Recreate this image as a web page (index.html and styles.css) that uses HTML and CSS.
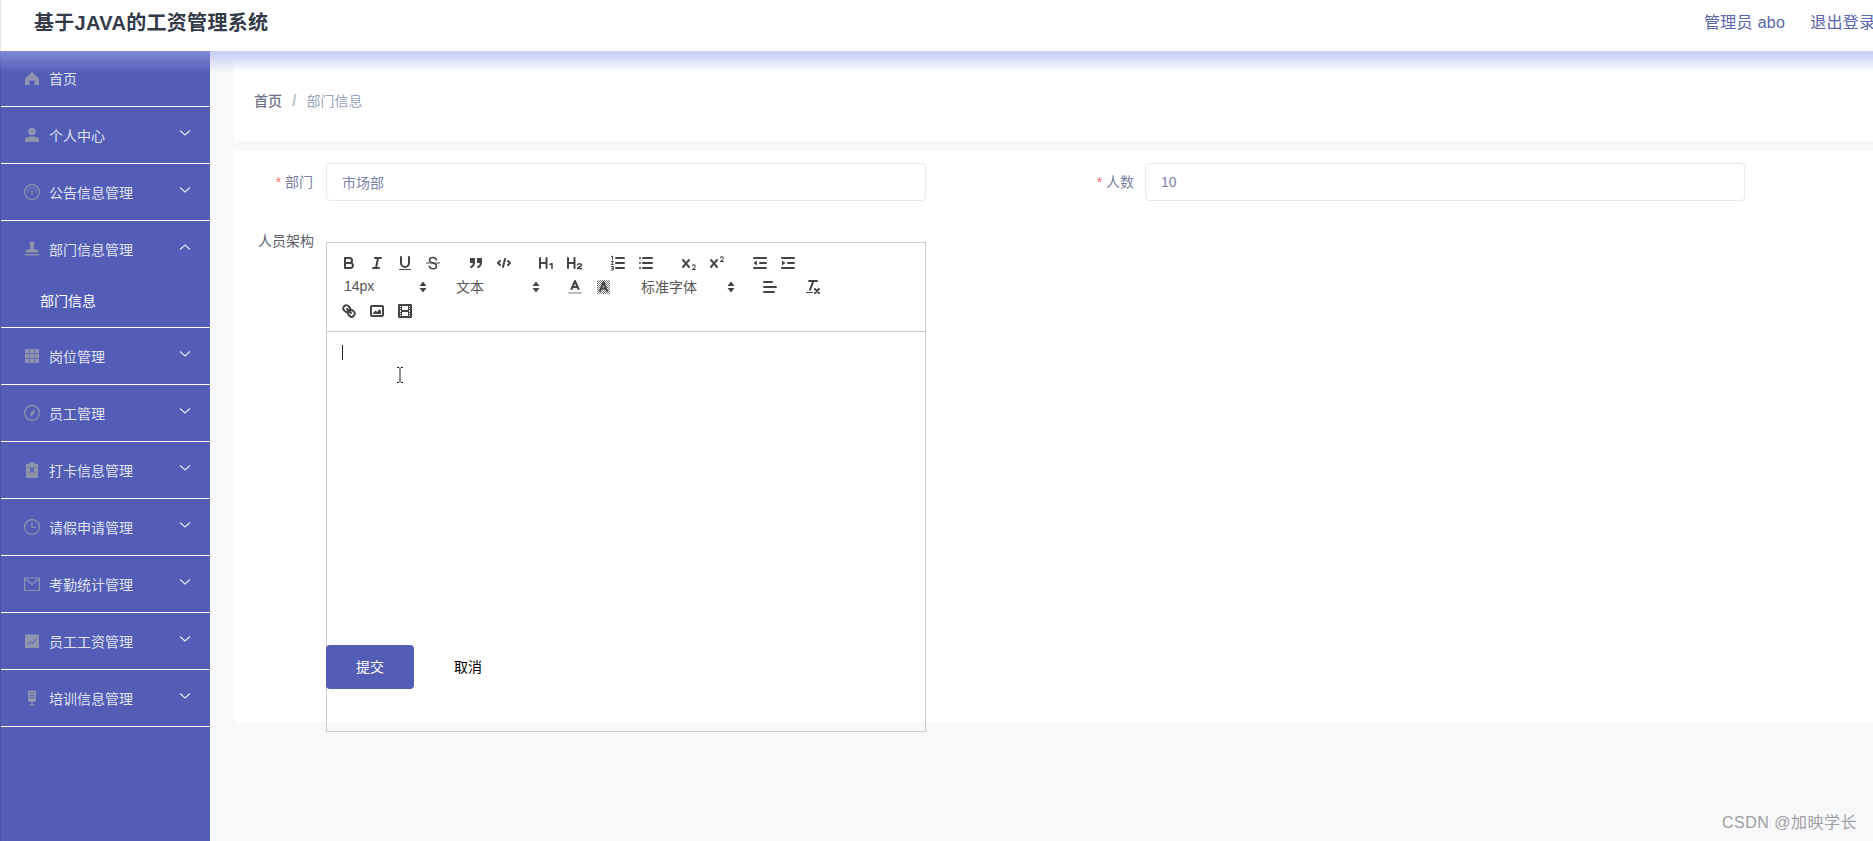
FILE: index.html
```html
<!DOCTYPE html>
<html lang="zh">
<head>
<meta charset="utf-8">
<title>基于JAVA的工资管理系统</title>
<link rel="stylesheet" href="styles.css">
</head>
<body>
<header class="topbar">
  <div class="brand">基于JAVA的工资管理系统</div>
  <div class="user"><span>管理员 abo</span><span class="logout">退出登录</span></div>
</header>
<div class="shell">
  <nav class="side">
    <div class="item first"><svg class="ic" viewBox="0 0 16 16"><path d="M8 2 1 8.500V15h4.500v-4.500h5V15H15V8.500z"/></svg><span>首页</span></div>
    <div class="item"><svg class="ic" viewBox="0 0 16 16"><circle cx="8" cy="4.500" r="3.800"/><path d="M1 15v-2.500C1 10.500 3 9.500 8 9.500s7 1 7 3V15z"/></svg><span>个人中心</span><svg class="chev" viewBox="0 0 12 8"><path d="M1 1.500 6 6l5-4.500"/></svg></div>
    <div class="item"><svg class="ic ol" viewBox="0 0 16 16"><circle cx="8" cy="8" r="7.400"/><path class="thin" d="M3.500 9a4.600 4.600 0 1 1 9 0"/><path d="M8 11V6.500"/></svg><span>公告信息管理</span><svg class="chev" viewBox="0 0 12 8"><path d="M1 1.500 6 6l5-4.500"/></svg></div>
    <div class="group">
      <div class="head"><svg class="ic" viewBox="0 0 16 16"><path d="M5.500 2.500C5.500 1 6.500.5 8 .5s2.500.5 2.500 2c0 2-1 3-1 5 0 1 3.500 1 5 2v2h-13v-2c1.500-1 5-1 5-2 0-2-1-3-1-5zM1 13h14v1.500H1z"/></svg><span>部门信息管理</span><svg class="chev" viewBox="0 0 12 8"><path d="M1 6.500 6 2l5 4.500"/></svg></div>
      <div class="sub">部门信息</div>
    </div>
    <div class="item"><svg class="ic" viewBox="0 0 16 16"><path d="M1 1h4.300v4.300H1zM5.900 1h4.200v4.300H5.900zM10.700 1H15v4.300h-4.300zM1 5.900h4.300v4.200H1zM5.900 5.900h4.200v4.200H5.900zM10.700 5.900H15v4.200h-4.300zM1 10.700h4.300V15H1zM5.900 10.700h4.200V15H5.900zM10.700 10.700H15V15h-4.300z"/></svg><span>岗位管理</span><svg class="chev" viewBox="0 0 12 8"><path d="M1 1.500 6 6l5-4.500"/></svg></div>
    <div class="item"><svg class="ic ol" viewBox="0 0 16 16"><circle cx="8" cy="8" r="7.400"/><path class="fl" d="M11 4 9.500 9.500 6 12l1-4.500z"/></svg><span>员工管理</span><svg class="chev" viewBox="0 0 12 8"><path d="M1 1.500 6 6l5-4.500"/></svg></div>
    <div class="item"><svg class="ic" viewBox="0 0 16 16"><path fill-rule="evenodd" d="M2 2h3V.5h6V2h3v14H2zM5 5.700 7 8l-2 2.300.9.800L8 9l2.100 2.100.9-.8L9 8l2-2.300-.9-.8L8 7 5.900 4.900z"/></svg><span>打卡信息管理</span><svg class="chev" viewBox="0 0 12 8"><path d="M1 1.500 6 6l5-4.500"/></svg></div>
    <div class="item"><svg class="ic ol" viewBox="0 0 16 16"><circle cx="8" cy="8" r="7.400"/><path d="M8 3.500V8.500h4"/></svg><span>请假申请管理</span><svg class="chev" viewBox="0 0 12 8"><path d="M1 1.500 6 6l5-4.500"/></svg></div>
    <div class="item"><svg class="ic ol" viewBox="0 0 16 16"><path d="M.6 2h14.800v12.500H.6zM1 2.500l7 6 7-6"/></svg><span>考勤统计管理</span><svg class="chev" viewBox="0 0 12 8"><path d="M1 1.500 6 6l5-4.500"/></svg></div>
    <div class="item"><svg class="ic" viewBox="0 0 16 16"><path fill-rule="evenodd" d="M1 1.500h14v13.500H1zM3.500 11.500l3-3 2 1.200 3.500-4 .5.500-3.800 4.500-2-1.200-2.600 2.500z"/></svg><span>员工工资管理</span><svg class="chev" viewBox="0 0 12 8"><path d="M1 1.500 6 6l5-4.500"/></svg></div>
    <div class="item"><svg class="ic" viewBox="0 0 16 16"><path fill-rule="evenodd" d="M4 2Q4 .5 5.500 .5h5Q12 .5 12 2v8q0 2-2 2H6q-2 0-2-2zM5.500 3.500h5v-.8h-5zM5.500 5.800h5V5h-5zM5.500 8.100h5v-.8h-5zM7.400 12.500h1.200v2H11v1H5v-1h2.400z"/></svg><span>培训信息管理</span><svg class="chev" viewBox="0 0 12 8"><path d="M1 1.500 6 6l5-4.500"/></svg></div>
  </nav>
  <main class="main">
    <div class="crumb"><b>首页</b><i>/</i><span>部门信息</span></div>
    <form class="card">
      <div class="row">
        <div class="field left"><label><em>*</em> 部门</label><div class="input">市场部</div></div>
        <div class="field right"><label><em>*</em> 人数</label><div class="input">10</div></div>
      </div>
      <div class="editor-row">
        <label class="elabel">人员架构</label>
        <div class="editor">
          <div class="toolbar">
            <div class="tline">
              <svg class="t" viewBox="0 0 18 18"><path d="M5,4H9.500A2.500,2.500,0,0,1,12,6.500v0A2.500,2.500,0,0,1,9.500,9H5V4Z"/><path d="M5,9h5.500A2.500,2.500,0,0,1,13,11.500v0A2.500,2.500,0,0,1,10.500,14H5V9Z"/></svg>
              <svg class="t" viewBox="0 0 18 18"><path d="M7 4h6M5 14h6M8 14l2-10"/></svg>
              <svg class="t" viewBox="0 0 18 18"><path d="M5,3V9a4,4,0,0,0,4,4H9a4,4,0,0,0,4-4V3"/><rect class="fl" x="3" y="15" width="12" height="1" rx=".5"/></svg>
              <svg class="t end" viewBox="0 0 18 18"><path class="hair" d="M2.500 9h13"/><path class="mid" d="M12.500 6C12 4.300 10.500 3.500 9 3.500 7 3.500 5.500 4.700 5.500 6.200c0 1.300 1 2.100 3.500 2.800 2.500.7 3.500 1.500 3.500 3 0 1.500-1.500 2.800-3.500 2.800-1.800 0-3.200-.8-3.700-2.500"/></svg>
              <svg class="t" viewBox="0 0 18 18"><rect class="fl" x="3" y="4" width="5" height="5"/><rect class="fl" x="10" y="4" width="5" height="5"/><path d="M7,8c0,4.030-3,5-3,5M14,8c0,4.030-3,5-3,5"/></svg>
              <svg class="t end" viewBox="0 0 18 18"><path d="M5 7 3 9l2 2M13 7l2 2-2 2M10 5 8 13"/></svg>
              <svg class="t" viewBox="0 0 18 18"><path d="M2 4v10M8.500 4v10M2 9h6.500"/><path class="mid" d="M12 10.500l2-1V14.500"/></svg>
              <svg class="t end" viewBox="0 0 18 18"><path d="M2 4v10M8.500 4v10M2 9h6.500"/><path class="mid" d="M11.500 11c.3-1.800 4-1.800 4 0 0 1.500-3.500 2-4 3.500h4"/></svg>
              <svg class="t" viewBox="0 0 18 18"><path d="M7 4h8M7 9h8M7 14h8"/><path class="hair" d="M2.500 2.500l1-.5v4M2.300 7.500h2l-2 3h2M2.300 12.500h2v3.500h-2M2.800 14.200h1.500"/></svg>
              <svg class="t end" viewBox="0 0 18 18"><path d="M6 4h9M6 9h9M6 14h9M3 4h0M3 9h0M3 14h0"/></svg>
              <svg class="t" viewBox="0 0 18 18"><path class="fl" d="M15.500,15H13.861a3.858,3.858,0,0,0,1.914-2.975,1.800,1.800,0,0,0-1.600-1.751A1.921,1.921,0,0,0,12.021,11.700a0.500,0.500,0,1,0,.957.291,0.914,0.914,0,0,1,1.053-.725,0.810,0.810,0,0,1,.744.762c0,1.076-1.170,1.870-1.940,2.431A1.456,1.456,0,0,0,12,15.500a0.500,0.500,0,0,0,.5.5h3A0.500,0.500,0,0,0,15.500,15Z"/><path class="fl" d="M9.651,5.241a1,1,0,0,0-1.410.108L6,7.964,3.759,5.349a1,1,0,1,0-1.519,1.300L4.683,9.500,2.241,12.350a1,1,0,1,0,1.519,1.300L6,11.036l2.241,2.615a1,1,0,0,0,1.519-1.300L7.317,9.500,9.759,6.651A1,1,0,0,0,9.651,5.241Z"/></svg>
              <svg class="t end" viewBox="0 0 18 18"><path class="fl" d="M15.500,7H13.861a4.015,4.015,0,0,0,1.914-2.975,1.800,1.800,0,0,0-1.600-1.751A1.922,1.922,0,0,0,12.021,3.700a0.500,0.500,0,1,0,.957.291,0.917,0.917,0,0,1,1.053-.725,0.810,0.810,0,0,1,.744.762c0,1.077-1.164,1.925-1.934,2.486A1.423,1.423,0,0,0,12,7.500a0.500,0.500,0,0,0,.5.5h3A0.500,0.500,0,0,0,15.500,7Z"/><path class="fl" d="M9.651,5.241a1,1,0,0,0-1.410.108L6,7.964,3.759,5.349a1,1,0,1,0-1.519,1.300L4.683,9.500,2.241,12.350a1,1,0,1,0,1.519,1.300L6,11.036l2.241,2.615a1,1,0,0,0,1.519-1.300L7.317,9.500,9.759,6.651A1,1,0,0,0,9.651,5.241Z"/></svg>
              <svg class="t" viewBox="0 0 18 18"><path d="M3 14h12M3 4h12M9 9h6"/><path class="fl" d="M6 6.500v5L2.500 9z"/></svg>
              <svg class="t" viewBox="0 0 18 18"><path d="M3 14h12M3 4h12M9 9h6"/><path class="fl" d="M3 6.500v5L6.500 9z"/></svg>
            </div>
            <div class="tline">
              <span class="pick w1">14px<svg class="updown" viewBox="0 0 8 12"><path d="M4 .5 7.500 5H.5zM4 11.500.5 7h7z"/></svg></span>
              <span class="pick w2">文本<svg class="updown" viewBox="0 0 8 12"><path d="M4 .5 7.500 5H.5zM4 11.500.5 7h7z"/></svg></span>
              <svg class="t" viewBox="0 0 18 18"><path d="M5.500 11 9 3l3.500 8M6.400 9h5.200"/><path class="mute" d="M3 15h12"/></svg>
              <svg class="t end" viewBox="0 0 18 18"><defs><pattern id="dots" width="2" height="2" patternUnits="userSpaceOnUse"><rect class="dot" width="1" height="1"/><rect class="dot" x="1" y="1" width="1" height="1"/></pattern></defs><rect class="dots" x="3" y="2" width="13" height="14"/><path d="M6 13 9.500 4l3.500 9M7 10.500h5"/></svg>
              <span class="pick w3">标准字体<svg class="updown" viewBox="0 0 8 12"><path d="M4 .5 7.500 5H.5zM4 11.500.5 7h7z"/></svg></span>
              <svg class="t end" viewBox="0 0 18 18"><path d="M3 4h8M3 9h12M3 14h10"/></svg>
              <svg class="t" viewBox="0 0 18 18"><path d="M5 3h8M6 12 9.350 3M11 11l4 4M15 11l-4 4"/><rect class="fl" x="2" y="14" width="7" height="1" rx=".5"/></svg>
            </div>
            <div class="tline">
              <svg class="t" viewBox="0 0 18 18"><path d="M7 7l4 4M8.900,4.577a3.476,3.476,0,0,1,.36,4.679A3.476,3.476,0,0,1,4.577,8.900C3.185,7.500,2.035,6.400,4.217,4.217S7.500,3.185,8.900,4.577Z"/><path d="M13.423,9.100a3.476,3.476,0,0,0-4.679-.36,3.476,3.476,0,0,0,.36,4.679c1.392,1.392,2.500,2.542,4.679.36S14.815,10.500,13.423,9.100Z"/></svg>
              <svg class="t" viewBox="0 0 18 18"><rect x="3" y="4" width="12" height="10" rx="1"/><path class="fl" d="M5 12v-1l2.500-2.500L9 10l2.500-3L13 9v3z"/></svg>
              <svg class="t" viewBox="0 0 18 18"><rect x="3" y="3" width="12" height="12"/><path class="fl" d="M5 3h1v12H5zM12 3h1v12h-1zM5 8h8v2H5zM3 5h3v1H3zM3 7h3v1H3zM3 10h3v1H3zM3 12h3v1H3zM12 5h3v1h-3zM12 7h3v1h-3zM12 10h3v1h-3zM12 12h3v1h-3z"/></svg>
            </div>
          </div>
          <div class="body"><span class="caret"></span></div>
        </div>
      </div>
      <div class="actions"><button type="button" class="submit">提交</button><button type="button" class="cancel">取消</button></div>
    </form>
  </main>
</div>
<svg class="ibeam" viewBox="0 0 8 16"><path d="M1 .5h2l1 1 1-1h2M4 1.500v13M1 15.500h2l1-1 1 1h2"/></svg>
<div class="mark">CSDN @加映学长</div>
</body>
</html>
```
FILE: styles.css
```css
* { box-sizing: border-box; }
html, body { margin: 0; height: 841px; overflow: hidden; }
body { font-family: "Liberation Sans", "Noto Sans CJK SC", sans-serif; background: #f7f8fa; font-size: 14px; color: #606266; }
.topbar { height: 51px; background: #fff; display: flex; align-items: center; justify-content: space-between; padding-left: 33px; border-left: 1px solid #e4e4e4; }
.brand { font-size: 20px; font-weight: 700; color: #333a4a; margin-top: -8px; letter-spacing: .3px; }
.user { display: flex; gap: 25px; font-size: 16px; letter-spacing: .3px; color: #5a64a8; margin-top: -10px; white-space: nowrap; width: 169px; flex: none; }
.shell { display: flex; height: 790px; position: relative; }
.shell::before { content: ""; position: absolute; left: 0; right: 0; top: 0; height: 22px; background: linear-gradient(rgba(162,172,241,.58), rgba(162,172,241,0)); z-index: 2; pointer-events: none; }
.side { width: 210px; flex: none; background: #535db5; color: #dfe1f2; border-left: 1px solid #4a54a8; }
.item, .group { border-bottom: 1px solid #fff; }
.item { height: 57px; display: flex; align-items: center; padding: 0 19px 0 23px; }
.item.first { height: 56px; padding-bottom: 2px; }
.head { height: 56px; display: flex; align-items: center; padding: 0 19px 0 23px; }
.item > span, .head > span { flex: 1; margin-left: 9px; font-size: 14px; }
.ic { width: 16px; height: 16px; fill: #8e93ae; flex: none; }
.ic.ol { fill: none; stroke: #8e93ae; stroke-width: 1.2; }
.ic .fl { fill: #8e93ae; stroke: none; }
.ic .thin { stroke-width: .8; }
.chev { width: 12px; height: 8px; fill: none; stroke: #e3e5f4; stroke-width: 1.2; margin-top: -4px; flex: none; }
.sub { height: 50px; padding-left: 39px; font-size: 14px; color: #fff; line-height: 49px; }
.main { flex: 1; padding: 10px 0 0 24px; min-width: 0; }
.crumb { height: 80px; background: #fff; display: flex; align-items: center; padding: 0 0 2px 20px; font-size: 14px; color: #97a3b8; }
.crumb b { font-weight: 500; color: #6d7388; }
.crumb i { font-style: normal; font-size: 16px; margin: 2px 10px 0; color: #c0c4cc; font-weight: 700; }
.card { margin-top: 10px; height: 572px; background: #fff; position: relative; padding-top: 12px; }
.row { display: flex; height: 38px; }
.field { display: flex; align-items: center; }
.field label { font-size: 14px; color: #7a80a5; width: 80px; text-align: right; padding-right: 13px; flex: none; white-space: nowrap; margin-top: -2px; }
.field em { font-style: normal; color: #f56c6c; }
.left { width: 788px; margin-left: 12px; }
.left .input { width: 600px; }
.right label { width: 111px; padding-right: 11px; }
.right .input { width: 600px; }
.input { height: 38px; border: 1px solid #e8e9f3; border-radius: 4px; padding: 0 15px 1px; display: flex; align-items: center; font-size: 14px; color: #7b82a8; background: #fff; }
.editor-row { display: flex; margin-top: 41px; height: 0; position: relative; z-index: 1; }
.elabel { width: 80px; text-align: right; font-size: 14px; line-height: 16px; color: #5d6166; flex: none; margin-top: -9px; }
.editor { width: 600px; height: 490px; margin-left: 12px; border: 1px solid #ccc; flex: none; }
.toolbar { height: 89px; border-bottom: 1px solid #ccc; padding: 8px 0 0 13px; }
.tline { height: 24px; display: flex; align-items: center; }
.t { width: 18px; height: 18px; margin-right: 10px; fill: none; stroke: #444; stroke-width: 2; stroke-linecap: round; stroke-linejoin: round; flex: none; }
.t.end { margin-right: 25px; }
.t .fl { fill: #444; stroke: none; }
.t .hair { stroke-width: 1; }
.t .mid { stroke-width: 1.500; }
.t .mute { stroke: #b9bcc5; }
.t .dots { fill: url(#dots); stroke: none; }
.t .dot { fill: #777; stroke: none; }
.pick { display: inline-flex; align-items: center; justify-content: space-between; font-size: 14px; color: #555; flex: none; padding: 0 0 2px 4px; height: 24px; }
.updown { width: 8px; height: 12px; fill: #444; margin-top: 2px; }
.w1 { width: 87px; margin-right: 25px; }
.w2 { width: 88px; margin-right: 26px; }
.w3 { width: 98px; margin-right: 26px; }
.body { padding: 13px 15px; height: 320px; }
.caret { display: block; width: 1px; height: 15px; background: #222; }
.actions { position: absolute; left: 92px; top: 494px; display: flex; z-index: 2; align-items: center; }
.submit { width: 88px; height: 44px; background: #535db5; color: #fff; border: 0; border-radius: 4px; font: inherit; font-size: 14px; padding: 0 0 2px; }
.cancel { width: 88px; height: 44px; background: #fff; color: #000; border: 0; font: inherit; font-size: 14px; margin-left: 10px; padding: 0 0 2px; }
.ibeam { position: absolute; left: 396px; top: 367px; width: 8px; height: 16px; fill: none; stroke: #222; stroke-width: 1; }
.mark { position: absolute; right: 16px; bottom: 8px; font-size: 16px; letter-spacing: .5px; color: #a0a0a0; }
```
